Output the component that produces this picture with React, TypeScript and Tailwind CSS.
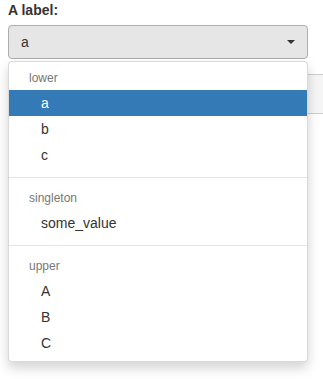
import React from 'react';

type Group = { label: string; options: string[] };

const groups: Group[] = [
  { label: 'lower', options: ['a', 'b', 'c'] },
  { label: 'singleton', options: ['some_value'] },
  { label: 'upper', options: ['A', 'B', 'C'] },
];

const selected = 'a';

const App: React.FC = () => {
  return (
    <div
      className="w-[323px] h-[379px] overflow-hidden bg-white text-[14px] leading-[20px] text-[#333]"
      style={{ fontFamily: '"Liberation Sans", Helvetica, Arial, sans-serif' }}
    >
      <div className="pl-[8px]">
        {/* Select input */}
        <div className="mb-[15px]">
          <label className="block font-bold mb-[5px]">A label:</label>
          <div className="relative w-[300px]">
            <button className="flex items-center justify-between w-full h-[34px] px-[12px] bg-[#e6e6e6] border border-[#adadad] rounded-[4px] text-left text-[#333]">
              <span>a</span>
              <span className="w-0 h-0 border-t-[4px] border-t-[#333] border-x-[4px] border-x-transparent" />
            </button>

            {/* Open dropdown menu */}
            <div className="absolute left-0 top-full z-10 mt-[2px] w-[300px] py-[5px] bg-white border border-[rgba(0,0,0,0.15)] rounded-[4px] shadow-[0_6px_12px_rgba(0,0,0,0.175)]">
              {groups.map((g, gi) => (
                <div key={g.label}>
                  {gi > 0 && <div className="h-px my-[9px] bg-[#e5e5e5]" />}
                  <div className="px-[20px] py-[3px] text-[12px] leading-[17.14px] text-[#777]">
                    {g.label}
                  </div>
                  {g.options.map((o) => (
                    <div
                      key={o}
                      className={
                        o === selected
                          ? 'pl-[32px] pr-[20px] py-[3px] bg-[#337ab7] text-white'
                          : 'pl-[32px] pr-[20px] py-[3px] text-[#333]'
                      }
                    >
                      {o}
                    </div>
                  ))}
                </div>
              ))}
            </div>
          </div>
        </div>

        {/* Output box behind the menu */}
        <pre className="w-[340px] h-[39.5px] p-[9.5px] bg-[#f5f5f5] border border-[#ccc] rounded-[4px] text-[13px]" />
      </div>
    </div>
  );
};

export default App;
